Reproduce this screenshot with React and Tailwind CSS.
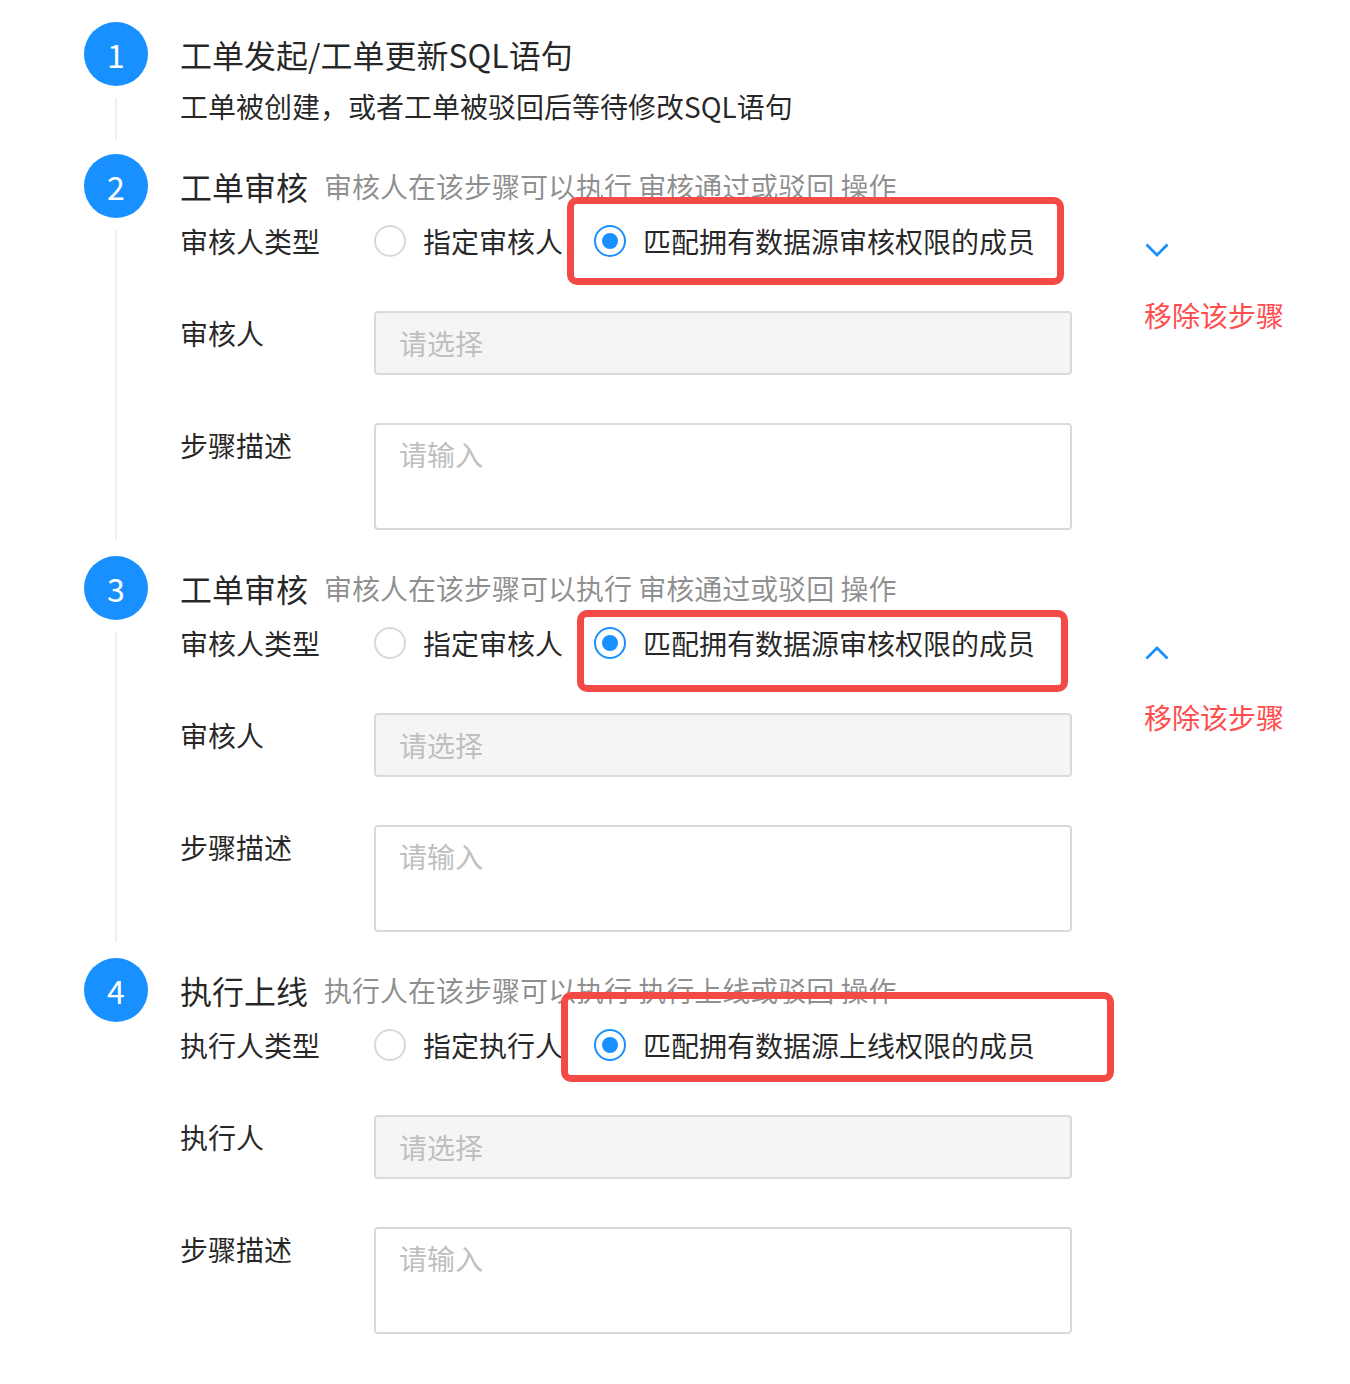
import React from "react";

const font = { fontFamily: '"PingFang SC", "Noto Sans CJK SC", "Noto Sans", sans-serif' };

const Circle = ({ n }) => (
  <div className="w-16 h-16 rounded-full bg-[#1890ff] text-white flex items-center justify-center text-[32px] shrink-0">
    {n}
  </div>
);

const Radio = ({ checked, label }) => (
  <div className="flex items-center">
    <span
      className={`w-8 h-8 rounded-full border-2 flex items-center justify-center bg-white ${
        checked ? "border-[#1890ff]" : "border-[#d9d9d9]"
      }`}
    >
      {checked && <span className="w-4 h-4 rounded-full bg-[#1890ff]" />}
    </span>
    <span className="ml-[17px] text-[28px] leading-[40px] text-[rgba(0,0,0,0.85)] whitespace-nowrap">{label}</span>
  </div>
);

const Chevron = ({ up }) => (
  <svg width="24" height="15" viewBox="0 0 24 15" fill="none" className="block">
    <path
      d={up ? "M1.5 13.5 L12 3 L22.5 13.5" : "M1.5 1.5 L12 12 L22.5 1.5"}
      stroke="#1890ff"
      strokeWidth="2.8"
    />
  </svg>
);

const Step = ({ n, title, sub, typeLabel, nameA, nameB, personLabel, box, actions, up, last }) => (
  <div className="flex">
    <div className="flex flex-col items-center w-16">
      <Circle n={n} />
      {!last && <div className="w-[2px] flex-1 bg-[#f0f0f0] mt-3 mb-4" />}
    </div>
    <div className="ml-[32px] flex">
      <div className="w-[892px] pb-[26px]">
        <div className="h-16 flex items-center whitespace-nowrap">
          <span className="text-[32px] text-[rgba(0,0,0,0.85)]">{title}</span>
          <span className="ml-[16px] text-[28px] text-[rgba(0,0,0,0.45)]">{sub}</span>
        </div>
        <div className="h-[46px] flex items-center relative">
          <div className="w-[194px] text-[28px] text-[rgba(0,0,0,0.85)]">{typeLabel}</div>
          <Radio label={nameA} />
          <div className="ml-[31px]">
            <Radio checked label={nameB} />
          </div>
          <div
            className={`absolute border-[7px] border-[#f34a46] rounded-[10px] pointer-events-none ${box}`}
          />
        </div>
        <div className="mt-[47px] flex">
          <div className="w-[194px] text-[28px] leading-[44px] text-[rgba(0,0,0,0.85)]">{personLabel}</div>
          <div className="w-[698px] h-16 bg-[#f5f5f5] border-2 border-[#d9d9d9] rounded-[4px] flex items-center pl-[23px] text-[28px] text-[#bfbfbf]">
            请选择
          </div>
        </div>
        <div className="mt-12 flex">
          <div className="w-[194px] text-[28px] leading-[44px] text-[rgba(0,0,0,0.85)]">步骤描述</div>
          <div className="w-[698px] h-[107px] bg-white border-2 border-[#d9d9d9] rounded-[4px] pl-[23px] pt-[9px] text-[28px] leading-[40px] text-[#bfbfbf]">
            请输入
          </div>
        </div>
      </div>
      {actions && (
        <div className="ml-[72px] pt-[89px] flex flex-col">
          <div className="ml-[1px]">
            <Chevron up={up} />
          </div>
          <div className="mt-[37px] text-[28px] leading-[40px] text-[#ff4d4f] whitespace-nowrap">移除该步骤</div>
        </div>
      )}
    </div>
  </div>
);

export default function App() {
  return (
    <div className="w-[1350px] h-[1384px] bg-white pl-[84px] pt-[22px]" style={font}>
      <div className="flex">
        <div className="flex flex-col items-center w-16">
          <Circle n={1} />
          <div className="w-[2px] flex-1 bg-[#f0f0f0] mt-3 mb-[14px]" />
        </div>
        <div className="ml-[32px] pb-[28px]">
          <div className="h-16 flex items-center text-[32px] text-[rgba(0,0,0,0.85)]">工单发起/工单更新SQL语句</div>
          <div className="text-[28px] leading-[40px] text-[rgba(0,0,0,0.85)]">工单被创建，或者工单被驳回后等待修改SQL语句</div>
        </div>
      </div>
      <Step
        n={2}
        title="工单审核"
        sub="审核人在该步骤可以执行 审核通过或驳回 操作"
        typeLabel="审核人类型"
        nameA="指定审核人"
        nameB="匹配拥有数据源审核权限的成员"
        personLabel="审核人"
        box="left-[387px] top-[-21px] w-[497px] h-[88px]"
        actions
      />
      <Step
        n={3}
        title="工单审核"
        sub="审核人在该步骤可以执行 审核通过或驳回 操作"
        typeLabel="审核人类型"
        nameA="指定审核人"
        nameB="匹配拥有数据源审核权限的成员"
        personLabel="审核人"
        box="left-[397px] top-[-10px] w-[491px] h-[82px]"
        actions
        up
      />
      <Step
        n={4}
        title="执行上线"
        sub="执行人在该步骤可以执行 执行上线或驳回 操作"
        typeLabel="执行人类型"
        nameA="指定执行人"
        nameB="匹配拥有数据源上线权限的成员"
        personLabel="执行人"
        box="left-[381px] top-[-30px] w-[553px] h-[90px]"
        last
      />
    </div>
  );
}
